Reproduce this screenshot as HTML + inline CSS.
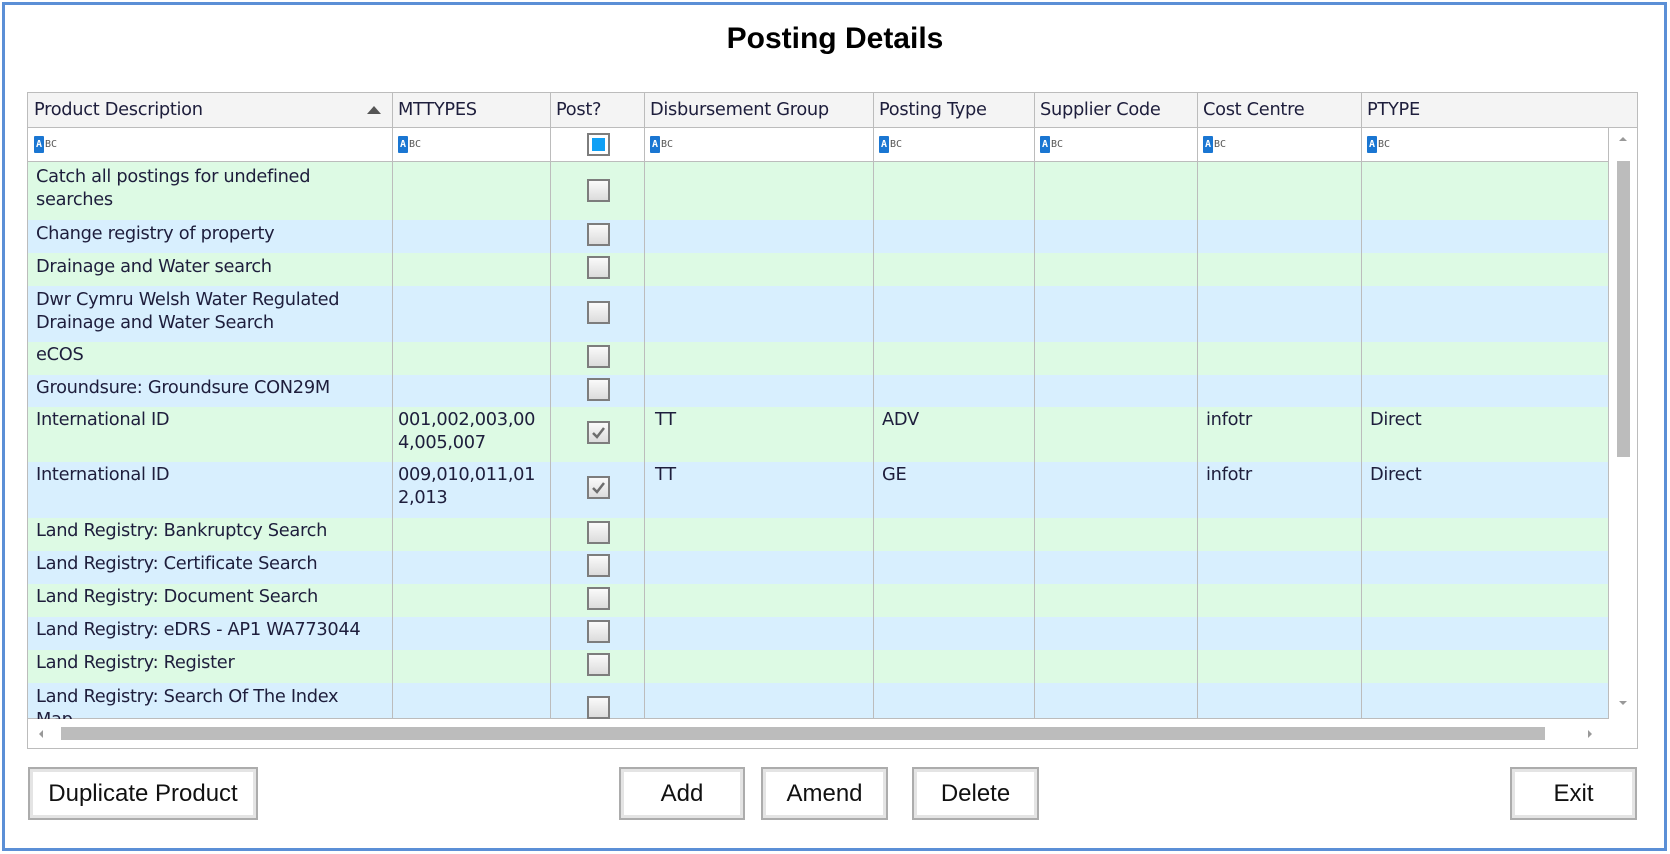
<!DOCTYPE html>
<html><head><meta charset="utf-8"><style>
*{box-sizing:border-box;margin:0;padding:0}
body{width:1670px;height:854px;background:#fff;position:relative;overflow:hidden;font-family:"DejaVu Sans","Liberation Sans",sans-serif;color:#1e1e3c}
.frame{position:absolute;left:2px;top:2px;width:1665px;height:849px;border:3px solid #5b8fd6}
.title{position:absolute;left:0;width:1670px;top:22px;text-align:center;font:bold 30px "Liberation Sans",sans-serif;color:#000}
.grid{position:absolute;left:27px;top:92px;width:1611px;height:657px;border:1px solid #bcbcbc;overflow:hidden;background:#fff}
.a{position:absolute}
.t{position:absolute;font-size:17.8px;line-height:23px;white-space:nowrap;letter-spacing:-0.3px}
.vl{position:absolute;width:1px;background:#bcbcbc}
.hl{position:absolute;height:1px;background:#bcbcbc}
.cb{position:absolute;width:23px;height:23px;border:2px solid #7d7d7d;background:linear-gradient(#fafafa,#dcdcdc)}
.abc{position:absolute;width:30px;height:17px}
.abc i{position:absolute;left:0;top:0;width:10px;height:17px;background:#1a76d2;border-radius:1px;color:#fff;font:bold 10px/17px "DejaVu Sans Mono",monospace;text-align:center;font-style:normal}
.abc b{position:absolute;left:11px;top:0;font:10px/17px "DejaVu Sans Mono",monospace;color:#555;font-weight:normal}
.btn{position:absolute;height:53px;border:2px solid #acacac;background:#fff;box-shadow:inset 0 0 0 3px #e4e4e4;font:24px "Liberation Sans",sans-serif;color:#111;text-align:center;line-height:49px}
</style></head><body>
<div class="frame"></div>
<div class="title">Posting Details</div>
<div class="grid">
 <div class="a" style="left:0;top:0;width:1611px;height:35px;background:#f4f4f4"></div>
 <div class="a" style="left:0;top:69px;width:1581px;height:58px;background:#ddfae4"></div>
 <div class="a" style="left:0;top:127px;width:1581px;height:33px;background:#d8effe"></div>
 <div class="a" style="left:0;top:160px;width:1581px;height:33px;background:#ddfae4"></div>
 <div class="a" style="left:0;top:193px;width:1581px;height:56px;background:#d8effe"></div>
 <div class="a" style="left:0;top:249px;width:1581px;height:33px;background:#ddfae4"></div>
 <div class="a" style="left:0;top:282px;width:1581px;height:32px;background:#d8effe"></div>
 <div class="a" style="left:0;top:314px;width:1581px;height:55px;background:#ddfae4"></div>
 <div class="a" style="left:0;top:369px;width:1581px;height:56px;background:#d8effe"></div>
 <div class="a" style="left:0;top:425px;width:1581px;height:33px;background:#ddfae4"></div>
 <div class="a" style="left:0;top:458px;width:1581px;height:33px;background:#d8effe"></div>
 <div class="a" style="left:0;top:491px;width:1581px;height:33px;background:#ddfae4"></div>
 <div class="a" style="left:0;top:524px;width:1581px;height:33px;background:#d8effe"></div>
 <div class="a" style="left:0;top:557px;width:1581px;height:33px;background:#ddfae4"></div>
 <div class="a" style="left:0;top:590px;width:1581px;height:36px;background:#d8effe"></div>
 <div class="hl" style="left:0;top:34px;width:1611px"></div>
 <div class="hl" style="left:0;top:68px;width:1581px"></div>
 <div class="vl" style="left:364px;top:0;height:626px"></div>
 <div class="vl" style="left:522px;top:0;height:626px"></div>
 <div class="vl" style="left:616px;top:0;height:626px"></div>
 <div class="vl" style="left:845px;top:0;height:626px"></div>
 <div class="vl" style="left:1006px;top:0;height:626px"></div>
 <div class="vl" style="left:1169px;top:0;height:626px"></div>
 <div class="vl" style="left:1333px;top:0;height:626px"></div>
 <div class="vl" style="left:1580px;top:35px;height:591px"></div>
 <div class="hl" style="left:0;top:625px;width:1581px"></div>
 <div class="t" style="left:6px;top:5px">Product Description</div>
 <div class="a" style="left:339px;top:13px;width:0;height:0;border-left:7px solid transparent;border-right:7px solid transparent;border-bottom:8px solid #555"></div>
 <div class="t" style="left:370px;top:5px">MTTYPES</div>
 <div class="t" style="left:528px;top:5px">Post?</div>
 <div class="t" style="left:622px;top:5px">Disbursement Group</div>
 <div class="t" style="left:851px;top:5px">Posting Type</div>
 <div class="t" style="left:1012px;top:5px">Supplier Code</div>
 <div class="t" style="left:1175px;top:5px">Cost Centre</div>
 <div class="t" style="left:1339px;top:5px">PTYPE</div>
 <div class="abc" style="left:6px;top:43px"><i>A</i><b>BC</b></div>
 <div class="abc" style="left:370px;top:43px"><i>A</i><b>BC</b></div>
 <div class="cb" style="left:559px;top:40px;background:#fff;"><div style="position:absolute;left:3px;top:3px;width:13px;height:13px;background:#0fa0f5"></div></div>
 <div class="abc" style="left:622px;top:43px"><i>A</i><b>BC</b></div>
 <div class="abc" style="left:851px;top:43px"><i>A</i><b>BC</b></div>
 <div class="abc" style="left:1012px;top:43px"><i>A</i><b>BC</b></div>
 <div class="abc" style="left:1175px;top:43px"><i>A</i><b>BC</b></div>
 <div class="abc" style="left:1339px;top:43px"><i>A</i><b>BC</b></div>
 <div class="t" style="left:8px;top:72px">Catch all postings for undefined<br>searches</div>
 <div class="cb" style="left:559px;top:86px"></div>
 <div class="t" style="left:8px;top:129px">Change registry of property</div>
 <div class="cb" style="left:559px;top:130px"></div>
 <div class="t" style="left:8px;top:162px">Drainage and Water search</div>
 <div class="cb" style="left:559px;top:163px"></div>
 <div class="t" style="left:8px;top:195px">Dwr Cymru Welsh Water Regulated<br>Drainage and Water Search</div>
 <div class="cb" style="left:559px;top:208px"></div>
 <div class="t" style="left:8px;top:250px">eCOS</div>
 <div class="cb" style="left:559px;top:252px"></div>
 <div class="t" style="left:8px;top:283px">Groundsure: Groundsure CON29M</div>
 <div class="cb" style="left:559px;top:285px"></div>
 <div class="t" style="left:8px;top:315px">International ID</div>
 <div class="t" style="left:370px;top:315px">001,002,003,00<br>4,005,007</div>
 <div class="cb" style="left:559px;top:328px"><svg width="19" height="19" style="position:absolute;left:0;top:0"><path d="M4 10 L8 14 L15 5" stroke="#6e6e6e" stroke-width="2.5" fill="none"/></svg></div>
 <div class="t" style="left:627px;top:315px">TT</div>
 <div class="t" style="left:854px;top:315px">ADV</div>
 <div class="t" style="left:1178px;top:315px">infotr</div>
 <div class="t" style="left:1342px;top:315px">Direct</div>
 <div class="t" style="left:8px;top:370px">International ID</div>
 <div class="t" style="left:370px;top:370px">009,010,011,01<br>2,013</div>
 <div class="cb" style="left:559px;top:383px"><svg width="19" height="19" style="position:absolute;left:0;top:0"><path d="M4 10 L8 14 L15 5" stroke="#6e6e6e" stroke-width="2.5" fill="none"/></svg></div>
 <div class="t" style="left:627px;top:370px">TT</div>
 <div class="t" style="left:854px;top:370px">GE</div>
 <div class="t" style="left:1178px;top:370px">infotr</div>
 <div class="t" style="left:1342px;top:370px">Direct</div>
 <div class="t" style="left:8px;top:426px">Land Registry: Bankruptcy Search</div>
 <div class="cb" style="left:559px;top:428px"></div>
 <div class="t" style="left:8px;top:459px">Land Registry: Certificate Search</div>
 <div class="cb" style="left:559px;top:461px"></div>
 <div class="t" style="left:8px;top:492px">Land Registry: Document Search</div>
 <div class="cb" style="left:559px;top:494px"></div>
 <div class="t" style="left:8px;top:525px">Land Registry: eDRS - AP1 WA773044</div>
 <div class="cb" style="left:559px;top:527px"></div>
 <div class="t" style="left:8px;top:558px">Land Registry: Register</div>
 <div class="cb" style="left:559px;top:560px"></div>
 <div class="t" style="left:8px;top:592px">Land Registry: Search Of The Index<br>Map</div>
 <div class="cb" style="left:559px;top:603px"></div>
 <div class="a" style="left:0;top:626px;width:1611px;height:40px;background:#fff"></div>
 <div class="a" style="left:1589px;top:68px;width:13px;height:296px;background:#bcbcbc"></div>
 <div class="a" style="left:1591px;top:44px;width:0;height:0;border-left:4px solid transparent;border-right:4px solid transparent;border-bottom:4px solid #999"></div>
 <div class="a" style="left:1591px;top:608px;width:0;height:0;border-left:4px solid transparent;border-right:4px solid transparent;border-top:4px solid #999"></div>
 <div class="a" style="left:33px;top:634px;width:1484px;height:13px;background:#bcbcbc"></div>
 <div class="a" style="left:11px;top:637px;width:0;height:0;border-top:4px solid transparent;border-bottom:4px solid transparent;border-right:4px solid #999"></div>
 <div class="a" style="left:1560px;top:637px;width:0;height:0;border-top:4px solid transparent;border-bottom:4px solid transparent;border-left:4px solid #999"></div>
</div>
<div class="btn" style="left:28px;top:767px;width:230px">Duplicate Product</div>
<div class="btn" style="left:619px;top:767px;width:126px">Add</div>
<div class="btn" style="left:761px;top:767px;width:127px">Amend</div>
<div class="btn" style="left:912px;top:767px;width:127px">Delete</div>
<div class="btn" style="left:1510px;top:767px;width:127px">Exit</div>
</body></html>
